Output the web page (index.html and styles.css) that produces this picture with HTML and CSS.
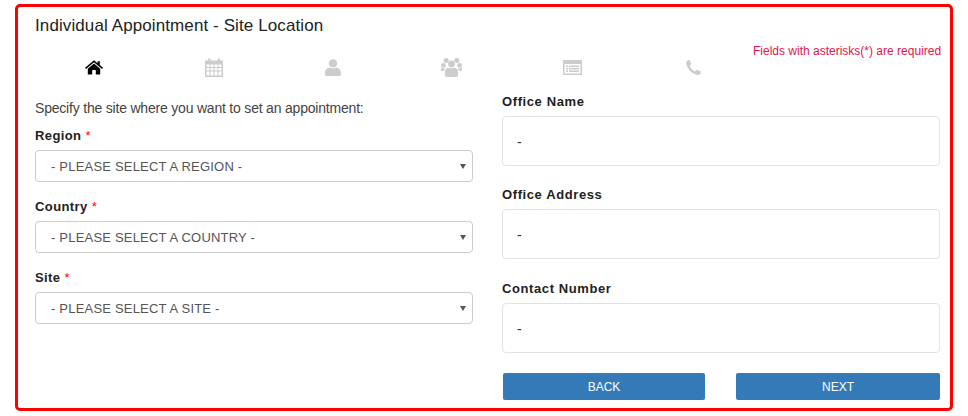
FILE: index.html
```html
<!DOCTYPE html>
<html lang="en">

<head>
    <meta charset="UTF-8">
    <meta name="viewport" content="width=device-width, initial-scale=1.0">
    <title>Individual Appointment - Site Location</title>
    <link rel="stylesheet" href="styles.css">
</head>

<body>
    <div class="frame">
        <h2 class="title">Individual Appointment - Site Location</h2>

        <div class="top-row">
            <div class="steps">
                <div class="step active">
                    <svg width="18" height="16" viewBox="0 0 18 16"><path d="M9 1.2 12.6 4.2V2.2H14.8V6L18 8.7 17 9.9 9 3.3 1 9.9 0 8.7Z"/><path d="M9 4.6 15.2 9.7V15.4H10.8V11H7.2V15.4H2.8V9.7Z"/></svg>
                </div>
                <div class="step">
                    <svg width="18" height="19" viewBox="0 0 18 19"><path fill-rule="evenodd" d="M3 0.5H5.5V2.5H12.5V0.5H15V2.5H18V19H0V2.5H3ZM1.5 6.5V9H4.5V6.5ZM5.5 6.5V9H8.5V6.5ZM9.5 6.5V9H12.5V6.5ZM13.5 6.5V9H16.5V6.5ZM1.5 10V12.5H4.5V10ZM5.5 10V12.5H8.5V10ZM9.5 10V12.5H12.5V10ZM13.5 10V12.5H16.5V10ZM1.5 13.5V17.5H4.5V13.5ZM5.5 13.5V17.5H8.5V13.5ZM9.5 13.5V17.5H12.5V13.5ZM13.5 13.5V17.5H16.5V13.5Z"/></svg>
                </div>
                <div class="step">
                    <svg width="16" height="17" viewBox="0 0 16 17"><circle cx="8" cy="4.4" r="4.2"/><path d="M0 14C0 10.6 2.4 9 5 8.6 6.6 9.8 9.4 9.8 11 8.6 13.6 9 16 10.6 16 14V15.2C16 16.2 15.2 17 14.2 17H1.8C.8 17 0 16.2 0 15.2Z"/></svg>
                </div>
                <div class="step">
                    <svg width="21" height="19" viewBox="0 0 21 19"><circle cx="5.2" cy="2.6" r="2.5"/><circle cx="15.8" cy="2.6" r="2.5"/><circle cx="2.4" cy="7.4" r="2.4"/><circle cx="18.6" cy="7.4" r="2.4"/><circle cx="10.5" cy="6" r="3.4"/><path d="M4 14C4 11 5.6 10 7.6 9.8 9.2 10.8 11.8 10.8 13.4 9.8 15.4 10 17 11 17 14V17C17 18.2 16.2 19 15 19H6C4.8 19 4 18.2 4 17Z"/><path d="M0 9.6 2.4 10.4 4 10 3 13H1C.4 13 0 12.6 0 12ZM21 9.6 18.6 10.4 17 10 18 13H20C20.6 13 21 12.6 21 12Z"/></svg>
                </div>
                <div class="step">
                    <svg width="19" height="15" viewBox="0 0 19 15"><path fill-rule="evenodd" d="M1 0H18C18.6 0 19 .4 19 1V14C19 14.6 18.6 15 18 15H1C.4 15 0 14.6 0 14V1C0 .4 .4 0 1 0ZM1.5 4V13.5H17.5V4ZM3 5.5H5V7H3ZM6 5.5H16V7H6ZM3 8H5V9.5H3ZM6 8H16V9.5H6ZM3 10.5H5V12H3ZM6 10.5H16V12H6Z"/></svg>
                </div>
                <div class="step">
                    <svg width="15" height="15" viewBox="0 0 15 15"><path d="M3.6 0 5.2 3.8C5.3 4.2 5.2 4.5 4.9 4.8L3.8 5.9C4.6 8 6.6 10.3 9 11.4L10.2 10.2C10.5 9.9 10.9 9.8 11.2 10L14.8 11.6C15 12.4 14.6 13.6 14 14.2 13.2 15 11.6 15.2 10 14.6 5.6 13.2 1.8 9.2.6 5 0 3.2.2 1.8 1 1 1.6.4 2.8 0 3.6 0Z"/></svg>
                </div>
            </div>
            <p class="required-note">Fields with asterisks(*) are required</p>
        </div>

        <div class="columns">
            <div class="col-left">
                <p class="intro">Specify the site where you want to set an appointment:</p>

                <div class="field">
                    <label for="region">Region <span class="star">*</span></label>
                    <div class="select-wrap">
                        <select id="region">
                            <option>- PLEASE SELECT A REGION -</option>
                        </select>
                    </div>
                </div>

                <div class="field">
                    <label for="country">Country <span class="star">*</span></label>
                    <div class="select-wrap">
                        <select id="country">
                            <option>- PLEASE SELECT A COUNTRY -</option>
                        </select>
                    </div>
                </div>

                <div class="field">
                    <label for="site">Site <span class="star">*</span></label>
                    <div class="select-wrap">
                        <select id="site">
                            <option>- PLEASE SELECT A SITE -</option>
                        </select>
                    </div>
                </div>
            </div>

            <div class="col-right">
                <div class="info">
                    <div class="info-label">Office Name</div>
                    <div class="info-box">-</div>
                </div>
                <div class="info">
                    <div class="info-label">Office Address</div>
                    <div class="info-box">-</div>
                </div>
                <div class="info">
                    <div class="info-label">Contact Number</div>
                    <div class="info-box">-</div>
                </div>

                <div class="buttons">
                    <button type="button" class="btn-back">BACK</button>
                    <button type="button" class="btn-next">NEXT</button>
                </div>
            </div>
        </div>
    </div>
</body>

</html>
```

FILE: styles.css
```css
* {
    box-sizing: border-box;
}

body {
    font-family: "Liberation Sans", Arial, sans-serif;
    margin: 0;
    padding: 4px 15px 5px;
    background-color: #fff;
    color: #333;
}

.frame {
    width: 938px;
    height: 407px;
    padding: 7px 10px 0 17px;
    border: 3px solid #f00;
    border-radius: 5px;
}

.title {
    margin: 0;
    font-size: 17px;
    font-weight: normal;
    line-height: 24px;
    letter-spacing: 0.1px;
    color: #222;
}

.top-row {
    display: flex;
    justify-content: space-between;
    height: 62px;
}

.steps {
    display: grid;
    grid-template-columns: 118px 121px 117px 120px 123px 119px;
    height: 28px;
    margin-top: 15px;
}

.step {
    display: flex;
    align-items: center;
    justify-content: center;
    fill: #ccc;
}

.step.active {
    fill: #000;
}

.required-note {
    margin: 5px 0 0;
    font-size: 12px;
    line-height: 16px;
    white-space: nowrap;
    color: #e0164a;
}

.columns {
    display: grid;
    grid-template-columns: 438px 438px;
    column-gap: 29px;
}

.col-right {
    margin-top: -8px;
}

.intro {
    margin: 0 0 10px;
    font-size: 14px;
    line-height: 16px;
    letter-spacing: -0.2px;
    color: #444;
}

.field {
    margin-bottom: 15px;
}

label {
    display: block;
    margin-bottom: 5px;
    font-size: 13px;
    font-weight: bold;
    line-height: 19px;
    letter-spacing: 0.4px;
    color: #222;
}

.star {
    font-weight: normal;
    color: #f00;
}

.select-wrap {
    position: relative;
}

.select-wrap::after {
    content: "";
    position: absolute;
    top: 14px;
    right: 7px;
    border-top: 5px solid #555;
    border-left: 3px solid transparent;
    border-right: 3px solid transparent;
    pointer-events: none;
}

select {
    display: block;
    width: 100%;
    height: 32px;
    padding: 0 20px 0 15px;
    border: 1px solid #ccc;
    border-radius: 4px;
    background-color: #fff;
    appearance: none;
    font-family: "Liberation Sans", Arial, sans-serif;
    font-size: 13px;
    letter-spacing: 0.2px;
    color: #555;
}

.info {
    margin-bottom: 19px;
}

.info + .info {
    margin-bottom: 20px;
}

.info-label {
    margin-bottom: 4px;
    font-size: 13px;
    font-weight: bold;
    line-height: 20px;
    letter-spacing: 0.6px;
    color: #222;
}

.info-box {
    height: 50px;
    padding: 0 14px;
    border: 1px solid #e3e3e3;
    border-radius: 4px;
    font-size: 14px;
    line-height: 50px;
}

.buttons {
    display: flex;
    justify-content: space-between;
    padding-left: 1px;
}

button {
    height: 27px;
    padding: 0;
    border: none;
    border-radius: 2px;
    background-color: #337ab7;
    font-family: "Liberation Sans", Arial, sans-serif;
    font-size: 12px;
    color: #fff;
}

.btn-back {
    width: 202px;
}

.btn-next {
    width: 204px;
}
```
